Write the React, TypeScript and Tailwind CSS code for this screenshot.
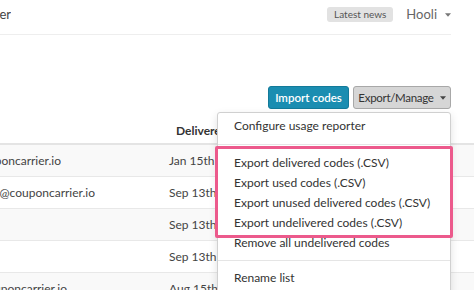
import React from "react";

const rows = [
  { email: "support@couponcarrier.io", date: "Jan 15th 2019", shade: true, end: "w-[61px]" },
  { email: "hello@couponcarrier.io", date: "Sep 13th 2018", shade: false, end: "w-[95px]" },
  { email: "", date: "Sep 13th 2018", shade: true, end: "w-[10px]" },
  { email: "", date: "Sep 13th 2018", shade: false, end: "w-[10px]" },
  { email: "info@couponcarrier.io", date: "Aug 15th 2018", shade: true, end: "w-[67px]" },
];

export default function App() {
  return (
    <div
      className="relative w-[474px] h-[290px] overflow-hidden bg-white text-[#333]"
      style={{ fontFamily: "Lato, 'Open Sans', sans-serif" }}
    >
      {/* header */}
      <div className="flex h-[35px] w-[451px] items-start justify-between border-b border-[#eeeeee] pt-[5px]">
        <div className="flex w-[11px] justify-end overflow-hidden">
          <span className="shrink-0 whitespace-nowrap text-[13px] leading-[18px] text-[#444]">Reporter</span>
        </div>
        <div className="flex items-center">
          <span className="rounded-[3px] bg-[#e2e2e2] px-[7px] py-[1px] text-[10px] leading-[13px] text-[#555]">
            Latest news
          </span>
          <span className="ml-[13px] flex items-center text-[13px] leading-[18px] text-[#666]">
            Hooli
            <svg width="6" height="4" viewBox="0 0 7 4" className="ml-[8px] mt-[1px]">
              <path d="M0 0h7L3.5 4z" fill="#777" />
            </svg>
          </span>
        </div>
      </div>

      {/* buttons */}
      <div className="mt-[51px] flex w-[451px] justify-end gap-[4px]">
        <button className="flex h-[23px] w-[81px] items-center justify-center rounded-[3px] border border-[#137a99] bg-[#1a8db1] text-[11.5px] font-semibold text-white">
          Import codes
        </button>
        <button className="flex h-[23px] w-[98px] items-center justify-center rounded-[3px] border border-[#a8a8a8] bg-[#d6d6d6] text-[11.5px] tracking-[-0.3px] text-[#333]">
          Export/Manage
          <svg width="6" height="4" viewBox="0 0 7 4" className="ml-[6px]">
            <path d="M0 0h7L3.5 4z" fill="#444" />
          </svg>
        </button>
      </div>

      {/* table */}
      <div className="mt-[4px] w-[474px] text-[12px] text-[#444]">
        <div className="flex h-[32px] items-center border-b-2 border-[#e4e4e4] pt-[6px]">
          <div className="w-[176px]" />
          <div className="font-bold text-[#333]">Delivered</div>
        </div>
        {rows.map((r, i) => (
          <div
            key={i}
            className={`flex h-[32px] items-center border-b border-[#e8e8e8] ${r.shade ? "bg-[#f9f9f9]" : "bg-white"}`}
          >
            <div className="w-[169px]">
              <div className={`flex justify-end overflow-hidden ${r.end}`}>
                <span className="shrink-0 whitespace-nowrap">{r.email}</span>
              </div>
            </div>
            <div className="whitespace-nowrap">{r.date}</div>
          </div>
        ))}
      </div>

      {/* dropdown */}
      <div className="absolute left-[217px] top-[112px] w-[234px] whitespace-nowrap rounded-[3px] border border-[#d0d0d0] bg-white pt-[3px] pb-[20px] text-[12px] leading-[20px] text-[#333] shadow-[0_3px_8px_rgba(0,0,0,0.12)]">
        <div className="px-[16px]">Configure usage reporter</div>
        <div className="my-[8px] h-px bg-[#e5e5e5]" />
        <div className="px-[16px]">Export delivered codes (.CSV)</div>
        <div className="px-[16px]">Export used codes (.CSV)</div>
        <div className="px-[16px]">Export unused delivered codes (.CSV)</div>
        <div className="px-[16px]">Export undelivered codes (.CSV)</div>
        <div className="px-[16px]">Remove all undelivered codes</div>
        <div className="my-[7px] h-px bg-[#e5e5e5]" />
        <div className="px-[16px]">Rename list</div>
        <div className="pointer-events-none absolute left-[-3px] top-[33px] h-[92px] w-[238px] rounded-[2px] border-[3px] border-[#ec5a8c]" />
      </div>
    </div>
  );
}
